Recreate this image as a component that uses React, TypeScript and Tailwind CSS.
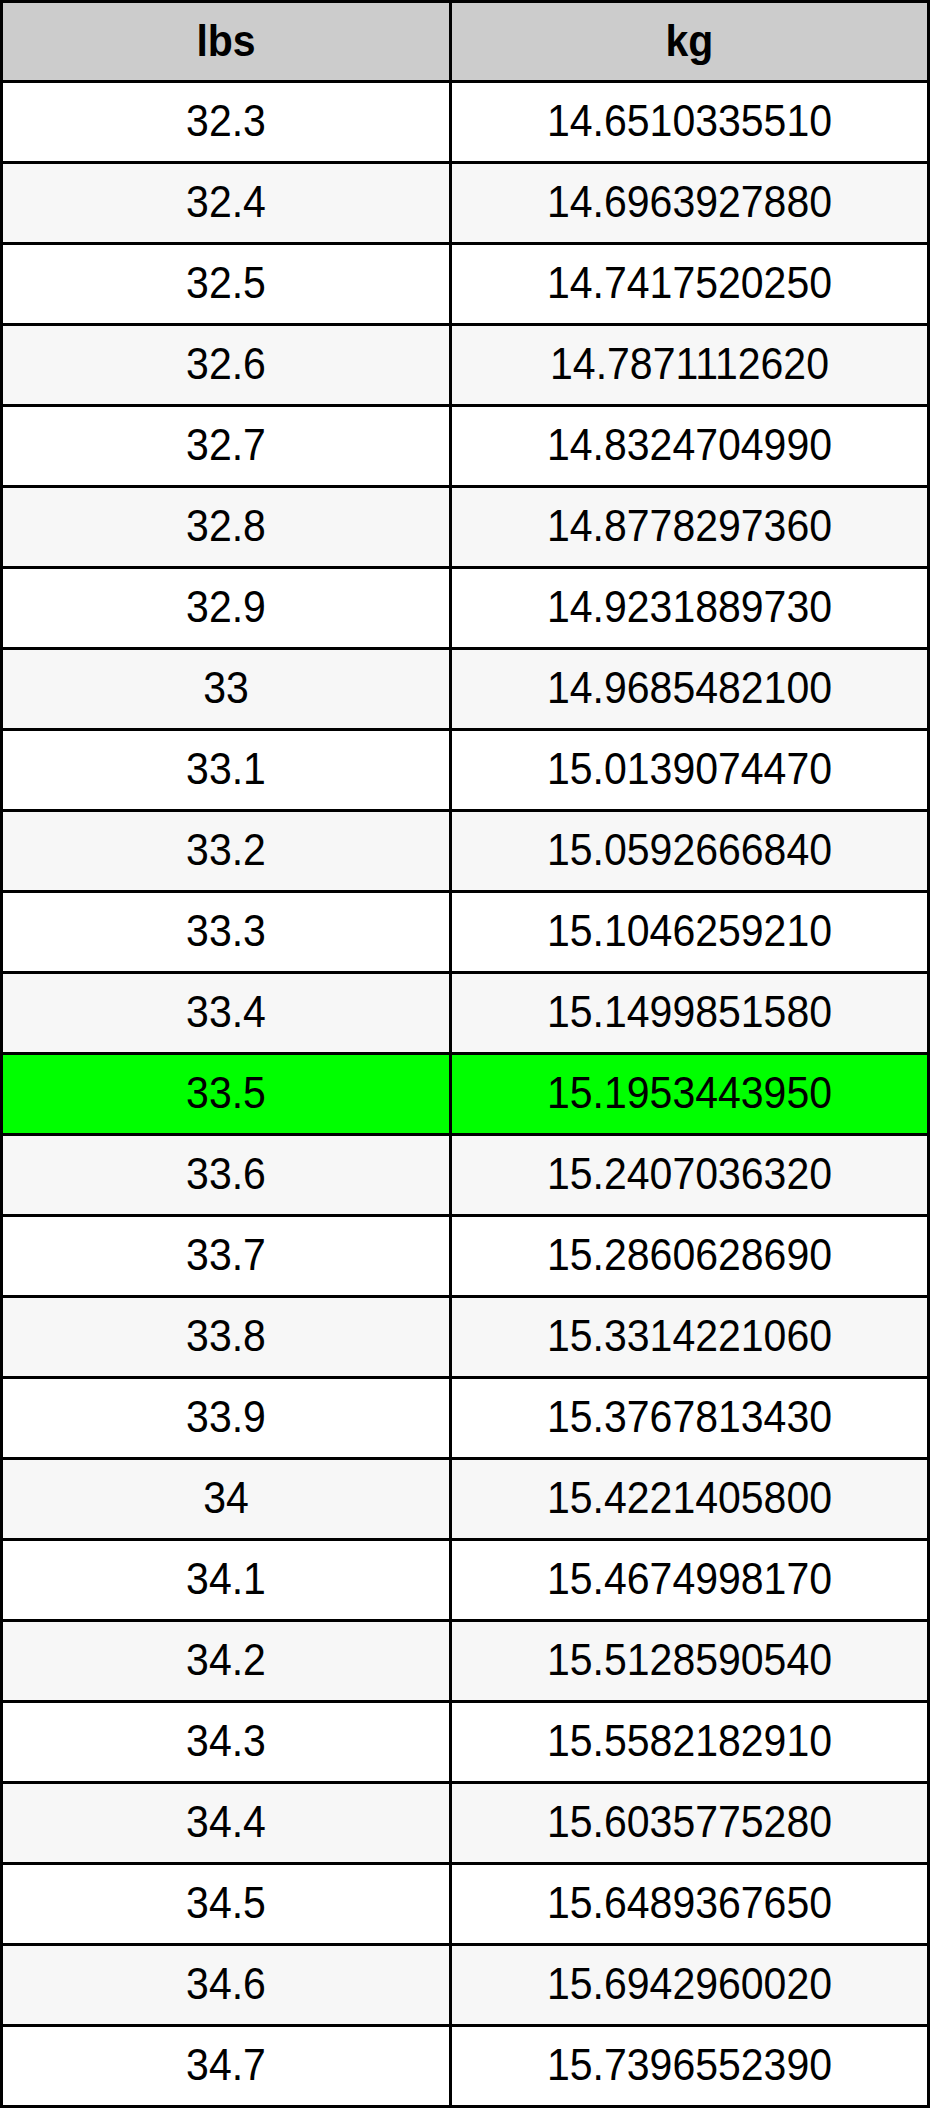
const rows: [string, string][] = [
  ["32.3", "14.6510335510"],
  ["32.4", "14.6963927880"],
  ["32.5", "14.7417520250"],
  ["32.6", "14.7871112620"],
  ["32.7", "14.8324704990"],
  ["32.8", "14.8778297360"],
  ["32.9", "14.9231889730"],
  ["33", "14.9685482100"],
  ["33.1", "15.0139074470"],
  ["33.2", "15.0592666840"],
  ["33.3", "15.1046259210"],
  ["33.4", "15.1499851580"],
  ["33.5", "15.1953443950"],
  ["33.6", "15.2407036320"],
  ["33.7", "15.2860628690"],
  ["33.8", "15.3314221060"],
  ["33.9", "15.3767813430"],
  ["34", "15.4221405800"],
  ["34.1", "15.4674998170"],
  ["34.2", "15.5128590540"],
  ["34.3", "15.5582182910"],
  ["34.4", "15.6035775280"],
  ["34.5", "15.6489367650"],
  ["34.6", "15.6942960020"],
  ["34.7", "15.7396552390"],
];

function Cell({ children, first }: { children: React.ReactNode; first?: boolean }) {
  return (
    <div
      className={
        first
          ? "flex w-[449px] items-center justify-center border-r-[3px] border-black"
          : "flex flex-1 items-center justify-center"
      }
    >
      <span className="inline-block scale-y-110">{children}</span>
    </div>
  );
}

export default function App() {
  return (
    <div className="w-[930px] bg-white font-['Liberation_Sans',Arial,sans-serif] text-[41px] text-black">
      <div className="border-[3px] border-black">
        <div className="flex h-[77px] bg-[#cccccc] font-bold">
          <Cell first>lbs</Cell>
          <Cell>kg</Cell>
        </div>
        {rows.map(([lbs, kg], i) => {
          const bg = lbs === "33.5" ? "bg-[#00ff00]" : i % 2 === 1 ? "bg-[#f7f7f7]" : "bg-white";
          return (
            <div key={lbs} className={`flex h-[81px] border-t-[3px] border-black ${bg}`}>
              <Cell first>{lbs}</Cell>
              <Cell>{kg}</Cell>
            </div>
          );
        })}
      </div>
    </div>
  );
}
